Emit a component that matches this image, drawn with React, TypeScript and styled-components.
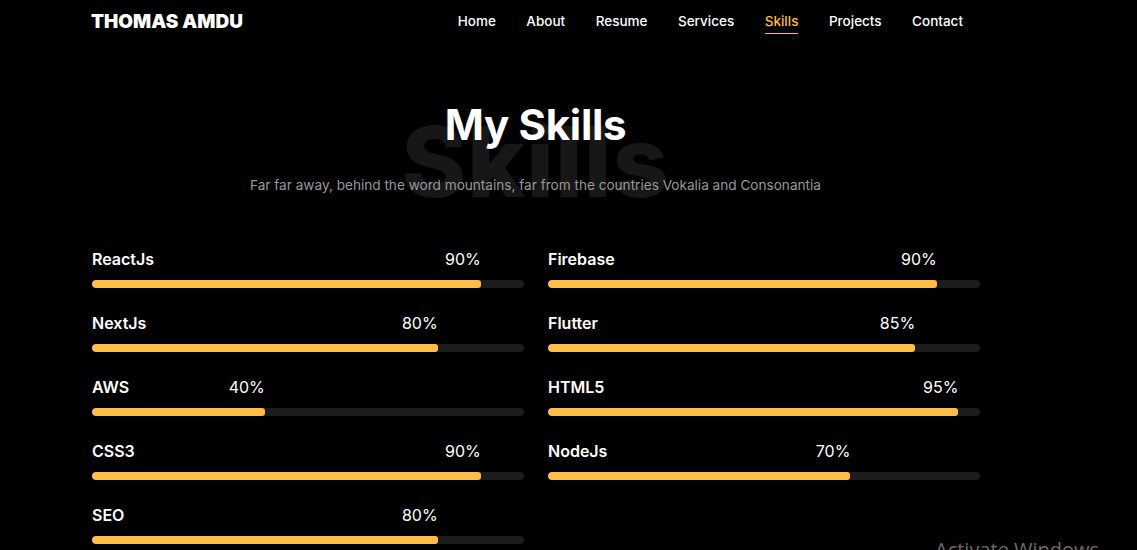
import React from "react";
import styled, { createGlobalStyle } from "styled-components";

const GlobalStyle = createGlobalStyle`
  html, body {
    margin: 0;
    padding: 0;
    background: #000;
    overflow: hidden;
  }
  body {
    font-family: Inter, "Open Sans", sans-serif;
    color: #fff;
  }
`;

const Page = styled.div`
  position: relative;
  width: 1137px;
  height: 550px;
  background: #000;
  overflow: hidden;
`;

const Header = styled.header`
  display: flex;
  justify-content: space-between;
  align-items: center;
  height: 42px;
  padding: 0 174px 0 91px;
`;

const Brand = styled.div`
  font-size: 19px;
  font-weight: 900;
  letter-spacing: 0;
  color: #fff;
`;

const Nav = styled.nav`
  display: flex;
  align-items: center;
  gap: 30.5px;
`;

const NavLink = styled.a<{ $active?: boolean }>`
  font-size: 13.5px;
  font-weight: 500;
  color: ${(p) => (p.$active ? "#ffbd39" : "#fff")};
  text-decoration: none;
  padding: 4px 0;
  border-bottom: 1px solid ${(p) => (p.$active ? "#ffbd39" : "transparent")};
`;

const Heading = styled.section`
  display: flex;
  flex-direction: column;
  align-items: center;
  padding-top: 62px;
  width: 889px;
  margin-left: 91px;
`;

const TitleWrap = styled.div`
  display: grid;
  justify-items: center;
`;

const BigBack = styled.span`
  grid-area: 1 / 1;
  font-size: 98px;
  font-weight: 800;
  line-height: 1;
  color: #171717;
  margin-top: 9px;
  letter-spacing: 1px;
`;

const Title = styled.h1`
  grid-area: 1 / 1;
  margin: 0;
  font-size: 42px;
  font-weight: 700;
  line-height: 1;
  color: #fff;
  z-index: 1;
  letter-spacing: -0.3px;
`;

const Subtitle = styled.p`
  margin: -34px 0 0;
  font-size: 13.6px;
  color: #999;
  position: relative;
  z-index: 1;
`;

const SkillGrid = styled.div`
  display: grid;
  grid-template-columns: 432px 432px;
  column-gap: 24px;
  row-gap: 22px;
  margin: 53px 0 0 92px;
`;

const Skill = styled.div`
  display: flex;
  flex-direction: column;
  gap: 8px;
`;

const LabelLine = styled.div`
  display: grid;
  height: 26px;
  align-items: center;
`;

const Name = styled.span`
  grid-area: 1 / 1;
  justify-self: start;
  font-size: 16px;
  font-weight: 600;
  color: #fff;
`;

const Percent = styled.span`
  grid-area: 1 / 1;
  justify-self: start;
  text-align: right;
  font-size: 16px;
  font-weight: 400;
  color: #fff;
`;

const Track = styled.div`
  height: 8px;
  border-radius: 4px;
  background: #1c1c1c;
  overflow: hidden;
`;

const Fill = styled.div`
  height: 100%;
  border-radius: 3px;
  background: #ffbd4a;
`;

const Watermark = styled.div`
  position: absolute;
  left: 935px;
  top: 536px;
  font-family: "Open Sans", sans-serif;
  font-size: 20px;
  color: #6b6b6b;
`;

const skills: [string, number][] = [
  ["ReactJs", 90],
  ["Firebase", 90],
  ["NextJs", 80],
  ["Flutter", 85],
  ["AWS", 40],
  ["HTML5", 95],
  ["CSS3", 90],
  ["NodeJs", 70],
  ["SEO", 80],
];

const links = ["Home", "About", "Resume", "Services", "Skills", "Projects", "Contact"];

export default function App() {
  return (
    <Page>
      <GlobalStyle />
      <Header>
        <Brand>THOMAS AMDU</Brand>
        <Nav>
          {links.map((l) => (
            <NavLink key={l} href="#" $active={l === "Skills"}>
              {l}
            </NavLink>
          ))}
        </Nav>
      </Header>
      <Heading>
        <TitleWrap>
          <BigBack>Skills</BigBack>
          <Title>My Skills</Title>
        </TitleWrap>
        <Subtitle>
          Far far away, behind the word mountains, far from the countries Vokalia and Consonantia
        </Subtitle>
      </Heading>
      <SkillGrid>
        {skills.map(([name, value]) => (
          <Skill key={name}>
            <LabelLine>
              <Name>{name}</Name>
              <Percent style={{ width: `${value}%` }}>{value}%</Percent>
            </LabelLine>
            <Track>
              <Fill style={{ width: `${value}%` }} />
            </Track>
          </Skill>
        ))}
      </SkillGrid>
      <Watermark>Activate Windows</Watermark>
    </Page>
  );
}
